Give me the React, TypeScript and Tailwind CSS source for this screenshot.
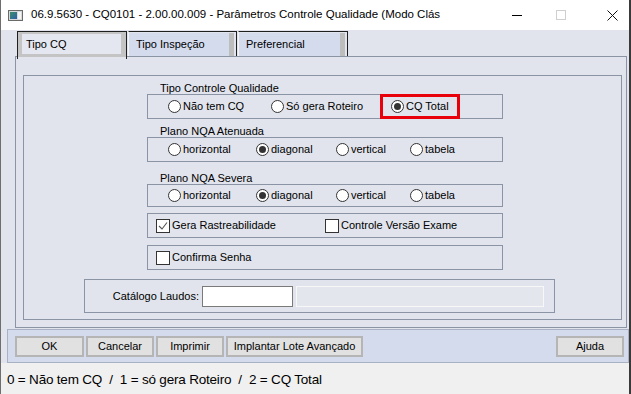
import React from 'react';

const line = 'border-[#8b94a4]';

function Radio({ label, checked, className }: { label: string; checked?: boolean; className?: string }) {
  return (
    <div className={`flex items-center shrink-0 ${className ?? ''}`}>
      <span className="w-[13px] h-[13px] rounded-full border border-[#333] bg-white flex items-center justify-center">
        {checked && <span className="w-[7px] h-[7px] rounded-full bg-[#333]" />}
      </span>
      <span className="ml-[2px]">{label}</span>
    </div>
  );
}

function Check({ label, checked, className }: { label: string; checked?: boolean; className?: string }) {
  return (
    <div className={`flex items-center shrink-0 ${className ?? ''}`}>
      <span className="w-[14px] h-[14px] border border-[#333] bg-white flex items-center justify-center">
        {checked && (
          <svg width="10" height="10" viewBox="0 0 10 10">
            <polyline points="1,5 4,8 9,1.5" fill="none" stroke="#555" strokeWidth="1.1" />
          </svg>
        )}
      </span>
      <span className="ml-[2px]">{label}</span>
    </div>
  );
}

function Group({ title, children, className }: { title: string; children: React.ReactNode; className?: string }) {
  return (
    <div className={`ml-[123px] w-[356px] ${className ?? ''}`}>
      <div className="h-[11px] leading-[11px] pl-[13px]">{title}</div>
      {children}
    </div>
  );
}

function Button({ label, className }: { label: string; className?: string }) {
  return (
    <button className={`h-[21px] border-2 border-[#b5b5b5] bg-[#e1e1e1] text-[11px] leading-none ${className ?? ''}`}>
      {label}
    </button>
  );
}

export default function App() {
  return (
    <div className="w-[631px] h-[394px] overflow-hidden bg-white border-l border-l-[#6e6e6e] border-r-2 border-r-[#3a3a3a] flex flex-col font-['Liberation_Sans',Arial,sans-serif] text-black text-[11px]">
      {/* title bar */}
      <div className="h-[30px] shrink-0 flex items-center bg-white">
        <svg className="ml-[7px] shrink-0" width="15" height="11" viewBox="0 0 15 11">
          <defs>
            <linearGradient id="ic" x1="0" y1="0" x2="1" y2="1">
              <stop offset="0" stopColor="#3b8f6a" />
              <stop offset="1" stopColor="#2f5fa8" />
            </linearGradient>
          </defs>
          <rect x="0.5" y="0.5" width="14" height="10" fill="#d9d9d9" stroke="#6a6a6a" />
          <rect x="2" y="2" width="7" height="7" fill="url(#ic)" />
          <rect x="10" y="2" width="3" height="7" fill="#f4f4f4" />
        </svg>
        <div className="ml-[8px] w-[409px] whitespace-nowrap text-[11.5px]">
          06.9.5630 - CQ0101 - 2.00.00.009 - Parâmetros Controle Qualidade (Modo Clás
        </div>
        <span className="ml-[72px] w-[10px] h-px bg-black shrink-0" />
        <span className="ml-[34px] w-[10px] h-[10px] border border-[#cfcfcf] shrink-0" />
        <svg className="ml-[41px] shrink-0" width="11" height="11" viewBox="0 0 11 11">
          <path d="M0.5 0.5 L10.5 10.5 M10.5 0.5 L0.5 10.5" stroke="#111" strokeWidth="1" />
        </svg>
      </div>

      {/* body */}
      <div className="flex-1 bg-[#e1e4ec] flex flex-col">
        {/* tabs */}
        <div className="h-[26px] pt-[1px] pl-[16px] flex items-start gap-[1px]">
          <div className="relative z-10 w-[110px] h-[28px] border-t border-l border-r border-[#1f1f1f] bg-[#e1e4ec]">
            <div className="h-[25px] border-l-[4px] border-t-[2px] border-r-[5px] border-b-[3px] border-[#c4c4c4] bg-[#e4e7ef] flex items-center pl-[4px]">
              Tipo CQ
            </div>
          </div>
          <div className="w-[109px] h-[25px] border-t border-r border-[#1f1f1f] border-l border-l-[#f4f4f4] pt-[1px] pr-[2px]">
            <div className="h-full border-r-[5px] border-[#bdbdbd] bg-[#d3dbed] flex items-center pl-[7px]">
              Tipo Inspeção
            </div>
          </div>
          <div className="w-[110px] h-[25px] border-t border-r border-[#1f1f1f] border-l border-l-[#f4f4f4] pt-[1px] pr-[2px]">
            <div className="h-full border-r-[5px] border-[#bdbdbd] bg-[#d3dbed] flex items-center pl-[7px]">
              Preferencial
            </div>
          </div>
        </div>

        {/* tab panel */}
        <div className={`ml-[14px] w-[612px] h-[272px] border ${line} pt-[18px] pl-[7px]`}>
          <div className={`w-[599px] h-[245px] border ${line} pt-[7px] flex flex-col`}>
            <Group title="Tipo Controle Qualidade">
              <div className={`relative h-[25px] border ${line} flex items-center pl-[20px]`}>
                <Radio label="Não tem CQ" className="w-[103px]" />
                <Radio label="Só gera Roteiro" className="w-[120px]" />
                <Radio label="CQ Total" checked />
                <div className="absolute left-[232px] top-[-1px] w-[80px] h-[25px] border-[3px] border-[#e8000b]" />
              </div>
            </Group>

            <Group title="Plano NQA Atenuada" className="mt-[7px]">
              <div className={`h-[25px] border ${line} flex items-center pl-[20px]`}>
                <Radio label="horizontal" className="w-[88px]" />
                <Radio label="diagonal" checked className="w-[80px]" />
                <Radio label="vertical" className="w-[74px]" />
                <Radio label="tabela" />
              </div>
            </Group>

            <Group title="Plano NQA Severa" className="mt-[11px]">
              <div className={`h-[23px] border ${line} flex items-center pl-[20px]`}>
                <Radio label="horizontal" className="w-[88px]" />
                <Radio label="diagonal" checked className="w-[80px]" />
                <Radio label="vertical" className="w-[74px]" />
                <Radio label="tabela" />
              </div>
            </Group>

            <div className={`ml-[123px] w-[356px] mt-[6px] h-[25px] border ${line} flex items-center pl-[8px]`}>
              <Check label="Gera Rastreabilidade" checked className="w-[169px]" />
              <Check label="Controle Versão Exame" />
            </div>

            <div className={`ml-[123px] w-[356px] mt-[7px] h-[25px] border ${line} flex items-center pl-[8px]`}>
              <Check label="Confirma Senha" />
            </div>

            <div className={`ml-[60px] w-[471px] mt-[9px] h-[34px] border ${line} flex items-center`}>
              <span className="w-[117px] text-right pr-[3px]">Catálogo Laudos:</span>
              <span className="w-[91px] h-[21px] bg-white border border-[#7a7a7a]" />
              <span className="ml-[3px] w-[248px] h-[21px] border border-[#f7f7f7] bg-[#e3e6ed]" />
            </div>
          </div>
        </div>

        {/* button bar */}
        <div className="mt-px ml-[6px] w-[622px] h-[34px] border border-[#a9b2c4] bg-[#d3dbed] flex items-start pt-[6px] pl-[7px] pr-[4px] gap-[2px]">
          <Button label="OK" className="w-[69px]" />
          <Button label="Cancelar" className="w-[68px]" />
          <Button label="Imprimir" className="w-[68px]" />
          <Button label="Implantar Lote Avançado" className="w-[137px]" />
          <Button label="Ajuda" className="w-[68px] ml-auto" />
        </div>
      </div>

      {/* status bar */}
      <div className="h-[32px] shrink-0 bg-[#f0f0f0] flex items-center pl-[6px] pt-[2px] text-[13.5px] tracking-[-0.2px]">
        0 = Não tem CQ&nbsp; /&nbsp; 1 = só gera Roteiro&nbsp; /&nbsp; 2 = CQ Total
      </div>
    </div>
  );
}
